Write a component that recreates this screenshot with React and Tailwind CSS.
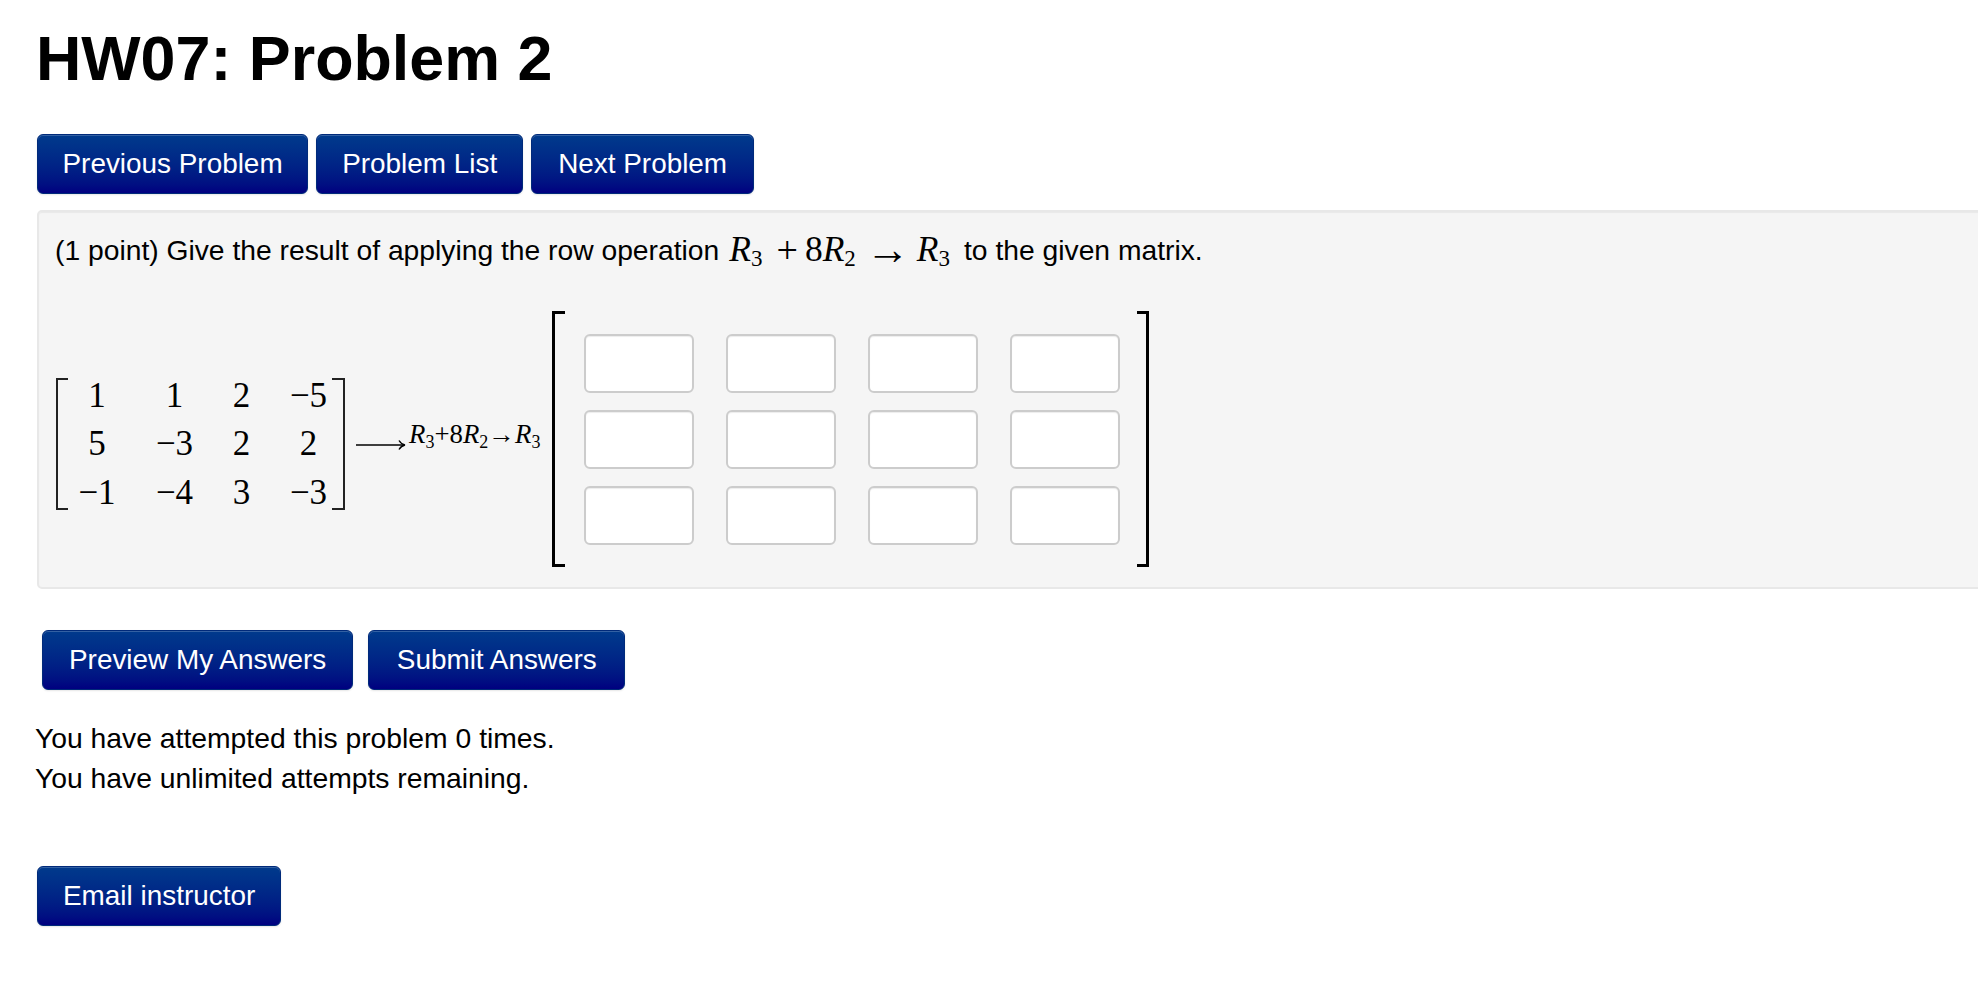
const sans = "font-['Liberation_Sans',Arial,sans-serif]";
const serif = "font-['Liberation_Serif','Times_New_Roman',serif]";

function Btn({ children, className = "px-[25px]" }) {
  return (
    <button
      className={`h-[60px] rounded-[6px] border border-[#002a7a] bg-gradient-to-b from-[#003a8c] to-[#000080] text-[27.9px] leading-none text-white shadow-[inset_0_1px_0_rgba(255,255,255,0.2),0_1px_2px_rgba(0,0,0,0.1)] ${className}`}
    >
      {children}
    </button>
  );
}

function R({ n, sub = "text-[23px]" }) {
  return (
    <span>
      <i>R</i>
      <span className={`${sub} relative top-[5px] leading-none`}>{n}</span>
    </span>
  );
}

const left = [
  ["1", "1", "2", "−5"],
  ["5", "−3", "2", "2"],
  ["−1", "−4", "3", "−3"],
];

export default function App() {
  return (
    <div className={`${sans} h-[992px] w-[1978px] overflow-hidden bg-white pl-[37px] text-black`}>
      <h1 className="-ml-[1px] pt-[24px] text-[62.8px] font-bold leading-[68px]">HW07: Problem 2</h1>

      <div className="mt-[42px] flex gap-[8px]">
        <Btn className="px-[24.5px]">Previous Problem</Btn>
        <Btn className="px-[25px]">Problem List</Btn>
        <Btn className="px-[26px]">Next Problem</Btn>
      </div>

      <div className="mt-[16px] h-[379px] w-[2100px] rounded-[5px] border-2 border-[#e8e8e8] bg-[#f5f5f5] pl-[16px] pt-[18px] shadow-[inset_0_1px_1px_rgba(0,0,0,0.05)]">
        <p className="flex h-[40px] items-center text-[28.25px] leading-[40px]">
          <span>(1 point) Give the result of applying the row operation</span>
          <span className={`${serif} ml-[10px] flex items-center text-[35.5px] leading-none`}>
            <R n="3" />
            <span className="ml-[14px] text-[38px]">+</span>
            <span className="ml-[7px]">8</span>
            <R n="2" />
            <span className="ml-[10px] text-[44px]">→</span>
            <span className="ml-[7px]"><R n="3" /></span>
          </span>
          <span className="ml-[14px]">to the given matrix.</span>
        </p>

        <div className="mt-[41px] flex items-start">
          <div className={`${serif} ml-[1px] mt-[67px] flex text-[35px] leading-none`}>
            <div className="h-[132px] w-[12px] border-y-2 border-l-2 border-[#222]" />
            <div className="ml-[10px] grid h-[132px] grid-cols-[38px_38px_17px_38px] content-start gap-x-[39.5px]">
              {left.flat().map((v, i) => (
                <span key={i} className="flex h-[48.5px] items-center justify-center pb-[14px]">{v}</span>
              ))}
            </div>
            <div className="ml-[4.5px] h-[132px] w-[13px] border-y-2 border-r-2 border-[#222]" />
          </div>

          <div className={`${serif} ml-[11px] mt-[121px] flex items-start text-[26.8px] leading-none`}>
            <svg width="50" height="14" viewBox="0 0 50 14" className="mt-[6px] shrink-0" fill="none" stroke="#000">
              <path d="M0 7H48" strokeWidth="1.6" />
              <path d="M43 2.5C44.5 5 46.5 6.5 49 7C46.5 7.5 44.5 9 43 11.5" strokeWidth="1.4" />
            </svg>
            <span className="-mt-[11px] ml-[3px] whitespace-nowrap">
              <R n="3" sub="text-[18px]" />+8<R n="2" sub="text-[18px]" />→<R n="3" sub="text-[18px]" />
            </span>
          </div>

          <div className="ml-[12px] flex">
            <div className="h-[256px] w-[13px] border-y-[3px] border-l-[3px] border-black" />
            <div className="ml-[19px] mt-[23px] grid h-[211px] grid-cols-[110px_110px_110px_110px] content-start gap-x-[32px] gap-y-[17px]">
              {Array.from({ length: 12 }).map((_, i) => (
                <input
                  key={i}
                  type="text"
                  className="h-[59px] w-[110px] rounded-[6px] border-2 border-[#cccccc] bg-white shadow-[inset_0_1px_1px_rgba(0,0,0,0.075)]"
                />
              ))}
            </div>
            <div className="ml-[17px] h-[256px] w-[12px] border-y-[3px] border-r-[3px] border-black" />
          </div>
        </div>
      </div>

      <div className="ml-[5px] mt-[41px] flex gap-[15px]">
        <Btn className="px-[26px]">Preview My Answers</Btn>
        <Btn className="px-[27.5px]">Submit Answers</Btn>
      </div>

      <div className="-ml-[2px] mt-[28px] text-[28.3px] leading-[40px]">
        <p>You have attempted this problem 0 times.</p>
        <p>You have unlimited attempts remaining.</p>
      </div>

      <Btn className="mt-[68px] px-[25px]">Email instructor</Btn>
    </div>
  );
}
